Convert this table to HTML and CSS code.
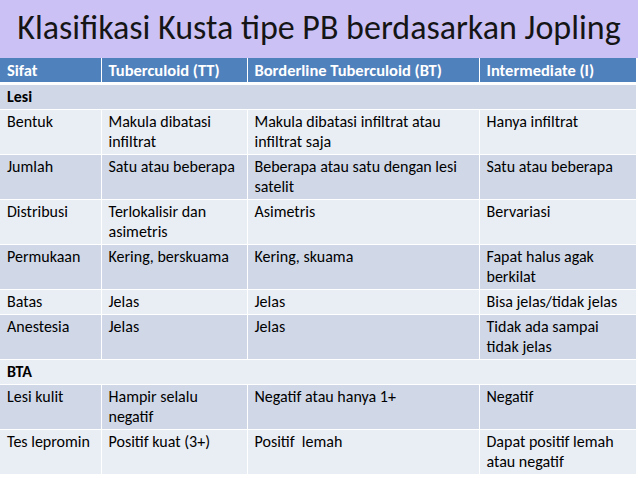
FILE: index.html
```html
<!DOCTYPE html>
<html>
<head>
<meta charset="utf-8">
<link rel="stylesheet" href="styles.css">
</head>
<body>
<div class="slide">
  <h1 class="title">Klasifikasi Kusta tipe PB berdasarkan Jopling</h1>
  <table class="grid">
    <colgroup>
      <col class="c1"><col class="c2"><col class="c3"><col class="c4">
    </colgroup>
    <thead>
      <tr><th>Sifat</th><th>Tuberculoid (TT)</th><th>Borderline Tuberculoid (BT)</th><th>Intermediate (I)</th></tr>
    </thead>
    <tbody>
      <tr class="dark sec"><td colspan="4">Lesi</td></tr>
      <tr class="light"><td>Bentuk</td><td>Makula dibatasi<br>infiltrat</td><td>Makula dibatasi infiltrat atau<br>infiltrat saja</td><td>Hanya infiltrat</td></tr>
      <tr class="dark"><td>Jumlah</td><td>Satu atau beberapa</td><td>Beberapa atau satu dengan lesi<br>satelit</td><td>Satu atau beberapa</td></tr>
      <tr class="light"><td>Distribusi</td><td>Terlokalisir dan<br>asimetris</td><td>Asimetris</td><td>Bervariasi</td></tr>
      <tr class="dark"><td>Permukaan</td><td>Kering, berskuama</td><td>Kering, skuama</td><td>Fapat halus agak<br>berkilat</td></tr>
      <tr class="light"><td>Batas</td><td>Jelas</td><td>Jelas</td><td>Bisa jelas/tidak jelas</td></tr>
      <tr class="dark"><td>Anestesia</td><td>Jelas</td><td>Jelas</td><td>Tidak ada sampai<br>tidak jelas</td></tr>
      <tr class="light sec"><td colspan="4">BTA</td></tr>
      <tr class="dark"><td>Lesi kulit</td><td>Hampir selalu<br>negatif</td><td>Negatif atau hanya 1+</td><td>Negatif</td></tr>
      <tr class="light"><td>Tes lepromin</td><td>Positif kuat (3+)</td><td>Positif&nbsp; lemah</td><td>Dapat positif lemah<br>atau negatif</td></tr>
    </tbody>
  </table>
</div>
</body>
</html>
```

FILE: styles.css
```css
html, body {
  margin: 0;
  padding: 0;
  background: #ffffff;
}
.slide {
  width: 638px;
  height: 478px;
  font-family: Carlito, Lato, sans-serif;
  color: #000;
  overflow: hidden;
}
.title {
  margin: 0;
  height: 58px;
  background: #ccc1f5;
  font-weight: normal;
  font-size: 34px;
  line-height: 56px;
  text-align: center;
  white-space: nowrap;
  color: #151515;
}
.grid {
  width: 636px;
  border-collapse: collapse;
  table-layout: fixed;
  font-size: 16px;
}
.c1 { width: 101px; }
.c2 { width: 146px; }
.c3 { width: 232px; }
.c4 { width: 157px; }
.grid th, .grid td {
  padding: 2px 2px 2px 7px;
  line-height: 20px;
  text-align: left;
  vertical-align: top;
  border: 1px solid #ffffff;
  white-space: nowrap;
  overflow: hidden;
}
.grid th {
  background: #4f81bd;
  color: #ffffff;
  font-weight: bold;
  font-size: 16.5px;
  border-top: 0;
  border-bottom: 3px solid #ffffff;
}
.grid tr.dark td { background: #d0d8e8; }
.grid tr.light td { background: #e9edf4; }
.grid tr.sec td { font-weight: bold; }
.grid td:first-child, .grid th:first-child { border-left: 0; }
```
